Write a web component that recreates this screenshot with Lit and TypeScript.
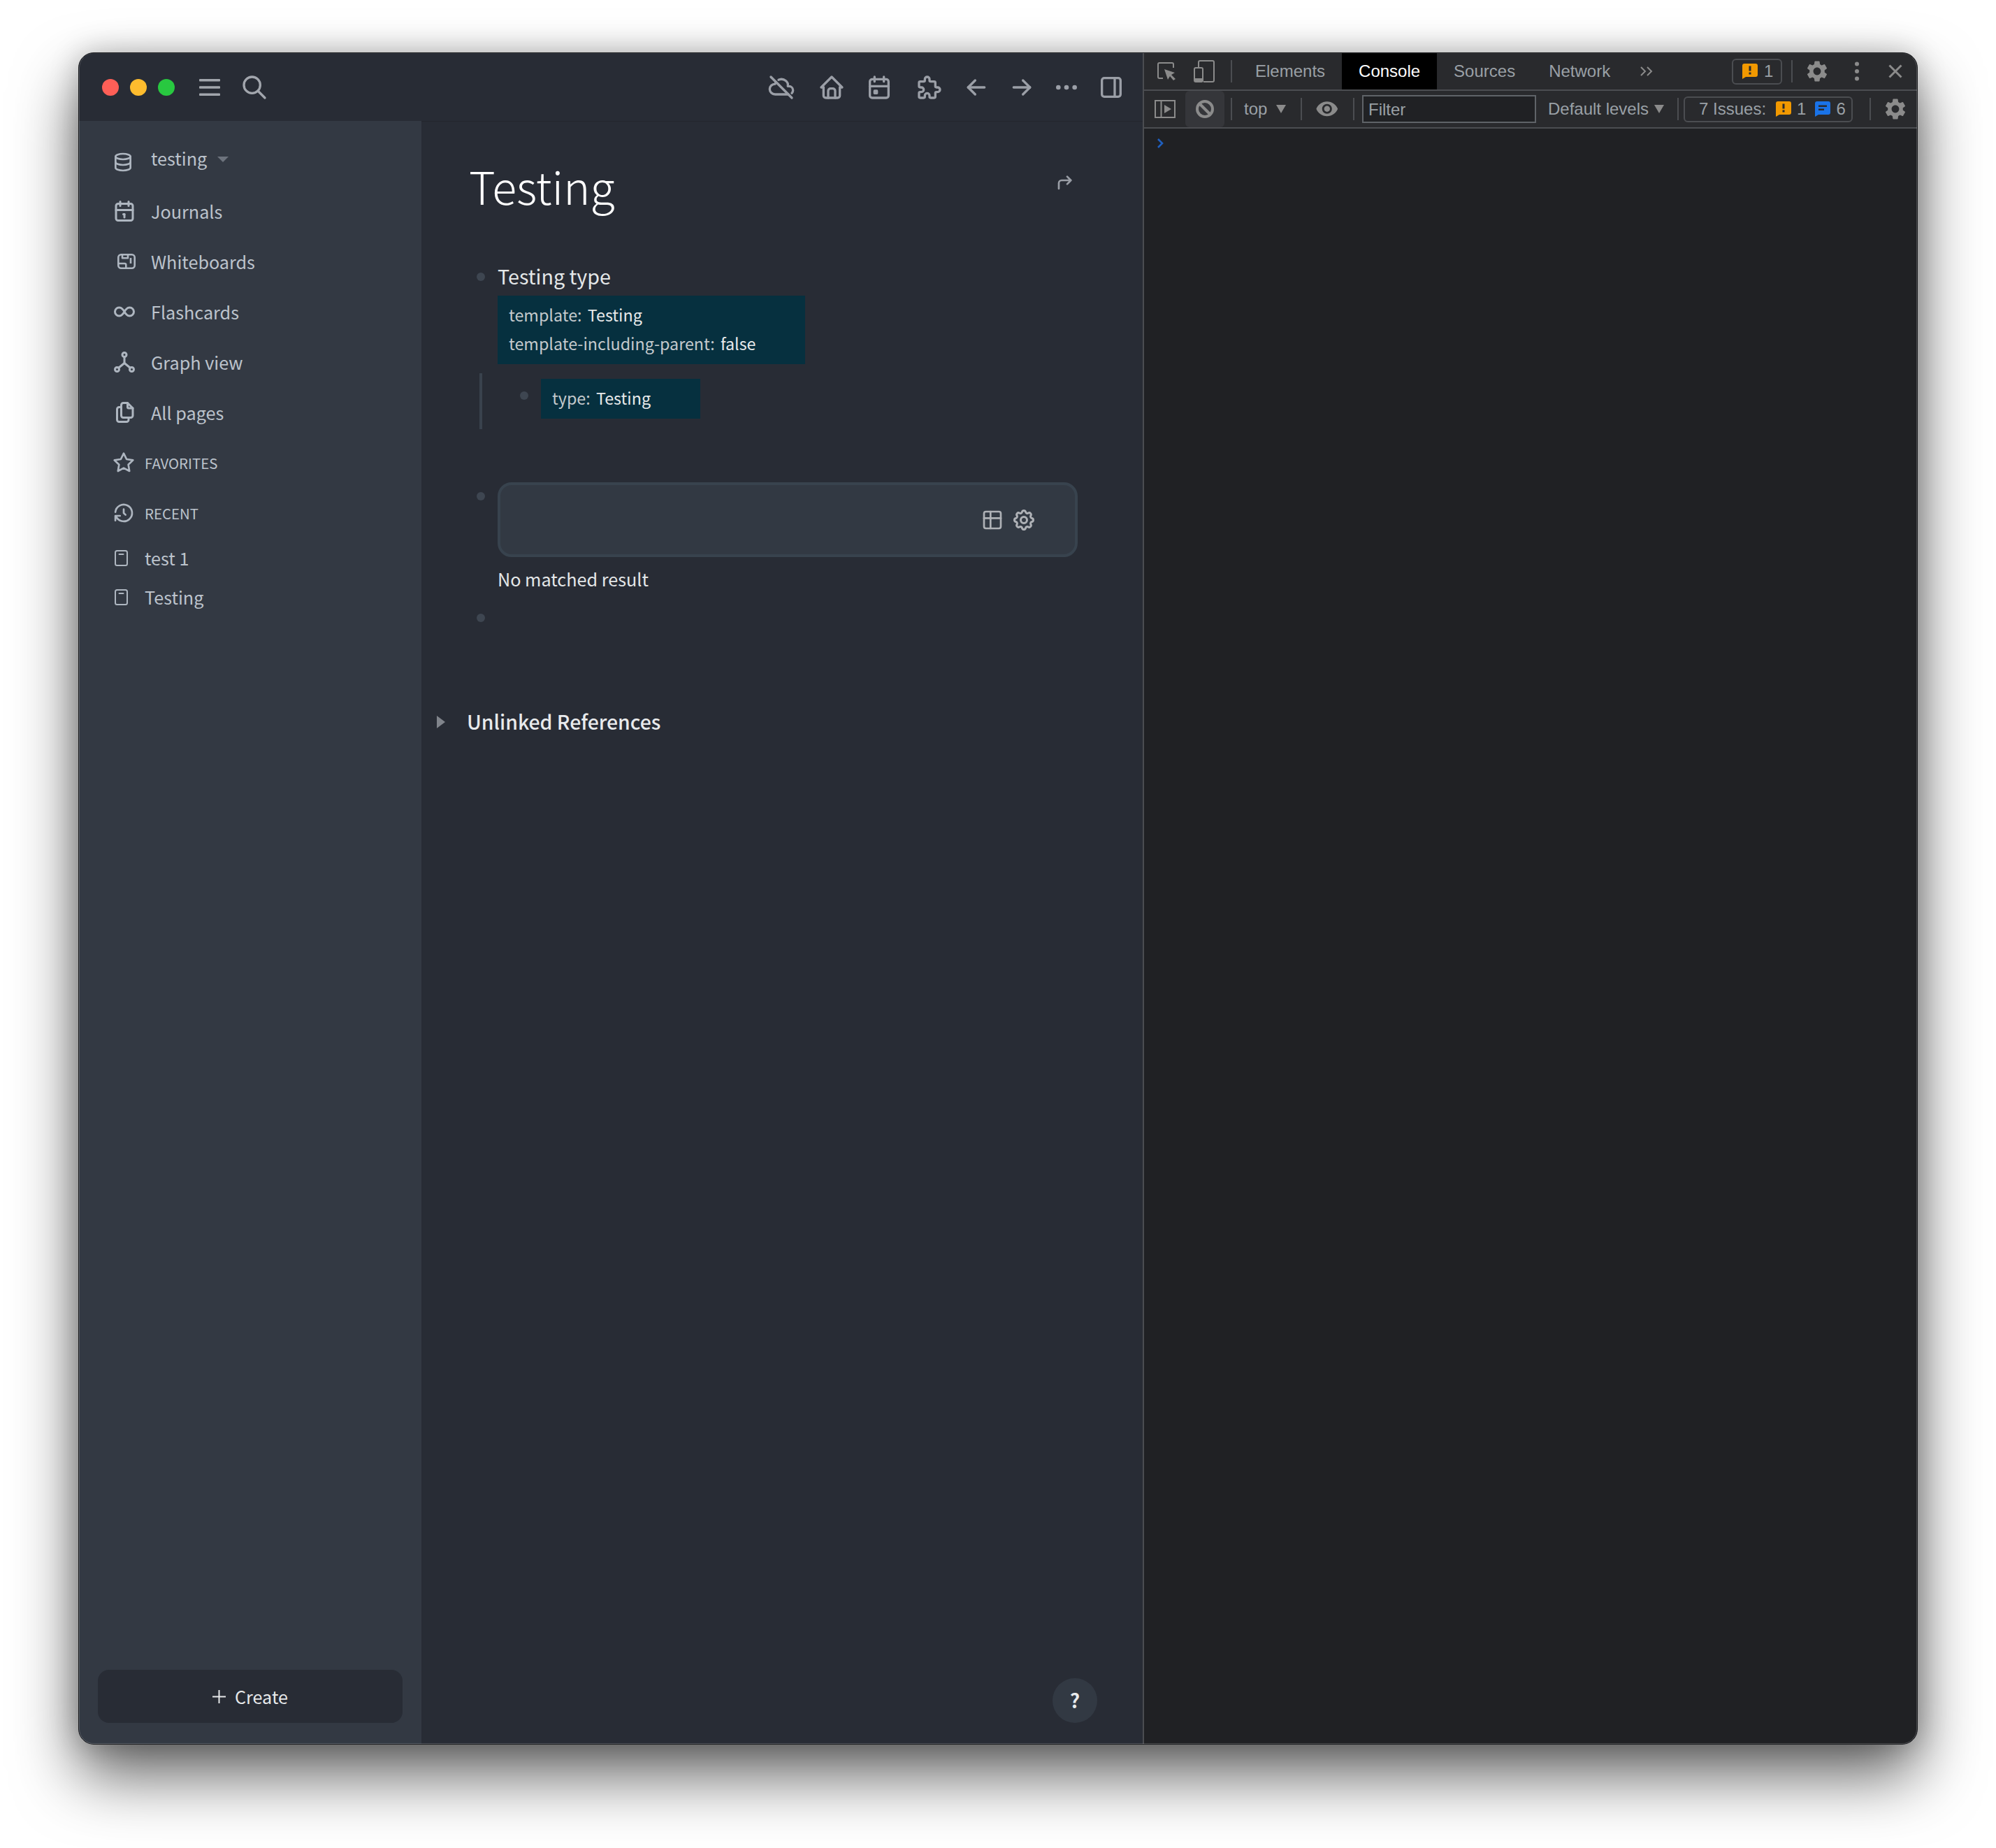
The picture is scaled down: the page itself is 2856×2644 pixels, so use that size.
import { LitElement, html, css, svg } from "lit";
import { customElement } from "lit/decorators.js";

const P = {
  cloudOff: ["M3 3l18 18", "M9.58 5.548c.24 -.11 .492 -.207 .752 -.286c1.88 -.572 3.956 -.193 5.444 1c1.488 1.19 2.162 3.007 1.77 4.769h.99c1.913 0 3.464 1.56 3.464 3.486c0 .957 -.383 1.824 -1.003 2.454m-2.997 1.033h-11.343c-2.572 -.004 -4.657 -2.011 -4.657 -4.487c0 -2.475 2.085 -4.482 4.657 -4.482c.13 -.582 .37 -1.128 .7 -1.62"],
  home: ["M5 12l-2 0l9 -9l9 9l-2 0", "M5 12v7a2 2 0 0 0 2 2h10a2 2 0 0 0 2 -2v-7", "M9 21v-6a2 2 0 0 1 2 -2h2a2 2 0 0 1 2 2v6"],
  calEvent: ["M4 7a2 2 0 0 1 2 -2h12a2 2 0 0 1 2 2v12a2 2 0 0 1 -2 2h-12a2 2 0 0 1 -2 -2z", "M16 3l0 4", "M8 3l0 4", "M4 11l16 0", "M8 15h2v2h-2z"],
  cal1: ["M4 7a2 2 0 0 1 2 -2h12a2 2 0 0 1 2 2v12a2 2 0 0 1 -2 2h-12a2 2 0 0 1 -2 -2z", "M16 3l0 4", "M8 3l0 4", "M4 11l16 0", "M11 15h1", "M12 15v3"],
  puzzle: ["M4 7h3a1 1 0 0 0 1 -1v-1a2 2 0 0 1 4 0v1a1 1 0 0 0 1 1h3a1 1 0 0 1 1 1v3a1 1 0 0 0 1 1h1a2 2 0 0 1 0 4h-1a1 1 0 0 0 -1 1v3a1 1 0 0 1 -1 1h-3a1 1 0 0 1 -1 -1v-1a2 2 0 0 0 -4 0v1a1 1 0 0 1 -1 1h-3a1 1 0 0 1 -1 -1v-3a1 1 0 0 1 1 -1h1a2 2 0 0 0 0 -4h-1a1 1 0 0 1 -1 -1v-3a1 1 0 0 1 1 -1"],
  left: ["M5 12l14 0", "M5 12l6 6", "M5 12l6 -6"],
  right: ["M5 12l14 0", "M13 18l6 -6", "M13 6l6 6"],
  dots: ["M4 12a1 1 0 1 0 2 0a1 1 0 1 0 -2 0", "M11 12a1 1 0 1 0 2 0a1 1 0 1 0 -2 0", "M18 12a1 1 0 1 0 2 0a1 1 0 1 0 -2 0"],
  panel: ["M4 6a2 2 0 0 1 2 -2h12a2 2 0 0 1 2 2v12a2 2 0 0 1 -2 2h-12a2 2 0 0 1 -2 -2z", "M15 4l0 16"],
  search: ["M3 10a7 7 0 1 0 14 0a7 7 0 1 0 -14 0", "M21 21l-6 -6"],
  db: ["M4 6a8 3 0 1 0 16 0a8 3 0 1 0 -16 0", "M4 6v6a8 3 0 0 0 16 0v-6", "M4 12v6a8 3 0 0 0 16 0v-6"],
  inf: ["M9.828 9.172a4 4 0 1 0 0 5.656a10 10 0 0 0 2.172 -2.828a10 10 0 0 1 2.172 -2.828a4 4 0 1 1 0 5.656a10 10 0 0 1 -2.172 -2.828a10 10 0 0 0 -2.172 -2.828"],
  graph: ["M10 5a2 2 0 1 0 4 0a2 2 0 1 0 -4 0", "M3 19a2 2 0 1 0 4 0a2 2 0 1 0 -4 0", "M17 19a2 2 0 1 0 4 0a2 2 0 1 0 -4 0", "M6.5 17.5l5.5 -4.5l5.5 4.5", "M12 7l0 6"],
  files: ["M15 3v4a1 1 0 0 0 1 1h4", "M18 17h-7a2 2 0 0 1 -2 -2v-10a2 2 0 0 1 2 -2h4l5 5v7a2 2 0 0 1 -2 2z", "M16 17v2a2 2 0 0 1 -2 2h-7a2 2 0 0 1 -2 -2v-10a2 2 0 0 1 2 -2h2"],
  star: ["M12 17.75l-6.172 3.245l1.179 -6.873l-5 -4.867l6.9 -1l3.086 -6.253l3.086 6.253l6.9 1l-5 4.867l1.179 6.873z"],
  history: ["M12 8l0 4l2 2", "M3.05 11a9 9 0 1 1 .5 4m-.5 5v-5h5"],
  share: ["M6 18v-6a3 3 0 0 1 3 -3h10l-4 -4m0 8l4 -4"],
  table: ["M3 5a2 2 0 0 1 2 -2h14a2 2 0 0 1 2 2v14a2 2 0 0 1 -2 2h-14a2 2 0 0 1 -2 -2v-14z", "M3 10h18", "M10 3v18"],
  gear: ["M10.325 4.317c.426 -1.756 2.924 -1.756 3.35 0a1.724 1.724 0 0 0 2.573 1.066c1.543 -.94 3.31 .826 2.37 2.37a1.724 1.724 0 0 0 1.065 2.572c1.756 .426 1.756 2.924 0 3.35a1.724 1.724 0 0 0 -1.066 2.573c.94 1.543 -.826 3.31 -2.37 2.37a1.724 1.724 0 0 0 -2.572 1.065c-.426 1.756 -2.924 1.756 -3.35 0a1.724 1.724 0 0 0 -2.573 -1.066c-1.543 .94 -3.31 -.826 -2.37 -2.37a1.724 1.724 0 0 0 -1.065 -2.572c-1.756 -.426 -1.756 -2.924 0 -3.35a1.724 1.724 0 0 0 1.066 -2.573c-.94 -1.543 .826 -3.31 2.37 -2.37c1 .608 2.296 .07 2.572 -1.065z", "M9 12a3 3 0 1 0 6 0a3 3 0 1 0 -6 0"],
};

const ti = (paths: string[], cls: string) => html`<svg class="ti ${cls}" viewBox="0 0 24 24">${paths.map((d) => svg`<path d=${d}></path>`)}</svg>`;

const whiteboard = html`<svg class="wb" viewBox="0 0 26 22"><rect x="1.3" y="1.3" width="23.4" height="19.4" rx="4"></rect><path d="M7 1.3v5h8v-5M1.3 14h9a2 2 0 0 1 2 2v4.7M19 6v8"></path></svg>`;
const pageIcon = html`<svg class="pg" viewBox="0 0 19 23"><rect x="1" y="1" width="17" height="21" rx="2.5"></rect><path d="M6.5 6h6"></path></svg>`;
const matGear = () => html`<svg class="mat" viewBox="0 0 24 24"><path d="M19.14 12.94c.04-.3.06-.61.06-.94 0-.32-.02-.64-.07-.94l2.03-1.58a.49.49 0 0 0 .12-.61l-1.92-3.32a.488.488 0 0 0-.59-.22l-2.39.96c-.5-.38-1.03-.7-1.62-.94l-.36-2.54a.484.484 0 0 0-.48-.41h-3.84c-.24 0-.43.17-.47.41l-.36 2.54c-.59.24-1.13.57-1.62.94l-2.39-.96c-.22-.08-.47 0-.59.22L2.74 8.87c-.12.21-.08.47.12.61l2.03 1.58c-.05.3-.09.63-.09.94s.02.64.07.94l-2.03 1.58a.49.49 0 0 0-.12.61l1.92 3.32c.12.22.37.29.59.22l2.39-.96c.5.38 1.03.7 1.62.94l.36 2.54c.05.24.24.41.48.41h3.84c.24 0 .44-.17.47-.41l.36-2.54c.59-.24 1.13-.56 1.62-.94l2.39.96c.22.08.47 0 .59-.22l1.92-3.32c.12-.22.07-.47-.12-.61l-2.01-1.58zM12 15.6c-1.98 0-3.6-1.62-3.6-3.6s1.62-3.6 3.6-3.6 3.6 1.62 3.6 3.6-1.62 3.6-3.6 3.6z"></path></svg>`;
const warnIcon = html`<svg class="bubble" viewBox="0 0 22 22"><path class="or" d="M3 0h16a3 3 0 0 1 3 3v13a3 3 0 0 1-3 3H5L0 22V3a3 3 0 0 1 3-3z"></path><rect class="dk" x="9.5" y="3.5" width="3" height="7"></rect><rect class="dk" x="9.5" y="12.5" width="3" height="3"></rect></svg>`;
const infoIcon = html`<svg class="bubble" viewBox="0 0 22 22"><path class="bl" d="M3 0h16a3 3 0 0 1 3 3v13a3 3 0 0 1-3 3H5L0 22V3a3 3 0 0 1 3-3z"></path><rect class="dk" x="5" y="5.5" width="12" height="2.5"></rect><rect class="dk" x="5" y="10.5" width="8" height="2.5"></rect></svg>`;

const headerIcons: [string[], number][] = [
  [P.cloudOff, 0], [P.home, 32], [P.calEvent, 28], [P.puzzle, 32],
  [P.left, 27], [P.right, 25], [P.dots, 24], [P.panel, 24],
];

const nav: [unknown, string][] = [
  [ti(P.cal1, "s36"), "Journals"],
  [whiteboard, "Whiteboards"],
  [ti(P.inf, "s36"), "Flashcards"],
  [ti(P.graph, "s36"), "Graph view"],
  [ti(P.files, "s36"), "All pages"],
];

@customElement("app-root")
export class AppRoot extends LitElement {
  static styles = css`
    :host {
      display: block; width: 2856px; height: 2644px; box-sizing: border-box;
      padding: 75px 112px 148px; background: #fff;
      font-family: "Noto Sans CJK SC", "Noto Sans", sans-serif;
    }
    .window {
      position: relative; display: flex; width: 2632px; height: 2421px; box-sizing: border-box;
      border: 1px solid #17181b; border-radius: 22px; overflow: hidden; background: #282c35;
    }
    .shadow { border-radius: 22px; box-shadow: 0 44px 90px rgba(0,0,0,.62), 0 0 40px rgba(0,0,0,.22); }
    .rim {
      position: absolute; inset: 0; border: 1px solid rgba(255,255,255,.2);
      border-top-color: rgba(255,255,255,.06);
      border-radius: 21px; pointer-events: none;
    }
    svg { display: block; flex: none; }
    .ti { fill: none; stroke: currentColor; stroke-width: 2; stroke-linecap: round; stroke-linejoin: round; }
    .s40 { width: 40px; height: 40px; }
    .s36 { width: 36px; height: 36px; }
    .s32 { width: 32px; height: 32px; }

    .app { flex: none; width: 1522px; display: flex; flex-direction: column; }
    .header { flex: none; height: 97px; display: flex; align-items: center; padding: 0 25px 0 33px; color: #9b9fa7; box-sizing: border-box; }
    .lights { display: flex; gap: 16px; }
    .light { width: 24px; height: 24px; border-radius: 50%; }
    .red { background: #ff5f57; } .yellow { background: #febc2e; } .green { background: #28c840; }
    .burger { width: 30px; margin-left: 35px; color: #a2a6ad; }
    .burger svg { width: 30px; height: 24px; fill: currentColor; }
    .search { margin-left: 29px; color: #a2a6ad; }
    .hright { margin-left: auto; display: flex; }

    .body { flex: 1; display: flex; min-height: 0; }
    .sidebar {
      flex: none; width: 490px; box-sizing: border-box; background: #333943; padding-top: 17px;
      display: flex; flex-direction: column; color: #bcc3cc; font-size: 25.2px; line-height: 36px;
    }
    .row { display: flex; align-items: center; height: 72px; padding-left: 47px; color: #bcc3cc; flex: none; }
    .row .box { width: 36px; display: flex; justify-content: center; color: #aeb6c0; margin-right: 20px; }
    .row.first { margin-bottom: 4px; }
    .row.first .box { justify-content: flex-start; margin-top: 12px; width: 32px; margin-right: 24px; }
    .caret { width: 0; height: 0; margin: 4px 0 0 15px; border-left: 8px solid transparent; border-right: 8px solid transparent; border-top: 8px solid #6d737d; }
    .sec { font-size: 20.4px; }
    .sec .box { width: 33px; margin-right: 14px; justify-content: center; }
    .rec { height: 56px; }
    .rec .box { width: 33px; margin-right: 14px; justify-content: flex-start; padding-left: 4px; box-sizing: border-box; }
    .wb { width: 26px; height: 22px; fill: none; stroke: currentColor; stroke-width: 2.6; stroke-linejoin: round; margin-left: 5px; }
    .pg { width: 19px; height: 23px; fill: none; stroke: currentColor; stroke-width: 2; stroke-linecap: round; }
    .create {
      margin: auto 27px 30px; height: 76px; border-radius: 16px; background: #282c35; color: #e6e8ea;
      display: flex; align-items: center; justify-content: center; font-size: 25.2px; gap: 13px; flex: none;
    }
    .plus { width: 19px; height: 19px; stroke: currentColor; stroke-width: 2; fill: none; }

    .main { position: relative; flex: 1; min-width: 0; border-top: 1px solid #23262d; box-sizing: border-box; background: #282c35; color: #e4e7e8; }
    .titlerow { display: flex; justify-content: space-between; height: 96px; margin: 46px 96px 0 68px; }
    .title { font-size: 64.6px; font-weight: 300; line-height: 91px; color: #fff; }
    .share { color: #9a9ea6; margin-top: 26px; }
    .block { display: flex; align-items: center; }
    .bullet { width: 12px; height: 12px; border-radius: 50%; background: #3e4651; flex: none; }
    .b1 { margin: 53px 0 0 79px; height: 54px; font-size: 28.7px; }
    .b1 .bullet { margin-right: 18px; }
    .b1 span { margin-top: -3px; }
    .b1 .bullet { margin-top: 0; }
    .code { background: #06303f; font-size: 23.3px; line-height: 41px; padding: 7px 16px 9px; box-sizing: border-box; color: #c3c9cc; }
    .code b { font-weight: 400; color: #e6e9ea; margin-left: 3px; }
    .c1 { margin-left: 109px; width: 440px; }
    .kids { margin: 13px 0 0 83px; height: 80px; box-sizing: border-box; border-left: 4px solid #39424d; padding: 8px 0 0 54px; display: flex; align-items: flex-start; }
    .kids .bullet { margin: 18px 18px 0 0; }
    .c2 { width: 228px; }
    .query-row { display: flex; margin: 76px 0 0 79px; }
    .query-row .bullet { margin: 14px 18px 0 0; }
    .query {
      width: 830px; height: 107px; box-sizing: border-box; border: 4px solid #38434e; border-radius: 20px; background: #323943;
      display: flex; align-items: center; justify-content: flex-end; padding-right: 55px; color: #aeb1b6; gap: 11px;
    }
    .nomatch { height: 64px; line-height: 62px; margin-left: 109px; font-size: 25.2px; color: #e4e7e8; }
    .empty { height: 46px; margin-left: 79px; }
    .unlinked { height: 60px; margin: 96px 0 0 22px; font-size: 28.4px; font-weight: 500; color: #e8eaec; display: flex; align-items: center; }
    .unlinked span { margin-top: -3px; }
    .tri { width: 0; height: 0; border-top: 9px solid transparent; border-bottom: 9px solid transparent; border-left: 12px solid #80848b; margin-right: 31px; }
    .help {
      position: absolute; right: 65px; bottom: 30px; width: 64px; height: 64px; border-radius: 50%;
      background: #323943; color: #e9ebed; font-size: 28px; font-weight: 700; padding-bottom: 3px; box-sizing: border-box;
      display: flex; align-items: center; justify-content: center;
    }

    .dev {
      flex: none; width: 1108px; box-sizing: border-box; border-left: 2px solid #4b4d51; background: #202124;
      font-family: "Liberation Sans", Arial, sans-serif; font-size: 24px; color: #9aa0a6;
      display: flex; flex-direction: column;
    }
    .bar { flex: none; display: flex; align-items: center; height: 54px; box-sizing: border-box; background: #292a2d; border-bottom: 2px solid #4b4d51; }
    .sep { width: 2px; height: 32px; background: #4b4d51; flex: none; }
    .tab { padding: 0 24px; height: 100%; display: flex; align-items: center; color: #9aa0a6; }
    .tab.on { background: #000; color: #fff; }
    .mat { fill: #8b8b8b; width: 36px; height: 36px; }
    .eye { width: 33.6px; height: 33.6px; }
    .stroke { fill: none; stroke: #8b8b8b; stroke-width: 2; }
    .thick { stroke-width: 4; }
    .x3 { stroke-width: 3; }
    .solid { fill: #8b8b8b; stroke: none; }
    .bubble { width: 22px; height: 22px; }
    .or { fill: #f29900; } .bl { fill: #1a73e8; } .dk { fill: #292a2d; }
    .badge { display: flex; align-items: center; height: 37px; box-sizing: border-box; border: 2px solid #4b4d51; border-radius: 6px; flex: none; }
    .w72 { width: 72px; } .w242 { width: 242px; }
    .down { width: 0; height: 0; border-left: 7px solid transparent; border-right: 7px solid transparent; border-top: 12px solid #8b8b8b; flex: none; }
    .clear { width: 56px; height: 52px; border-radius: 6px; background: #35363a; display: flex; align-items: center; justify-content: center; }
    .filter { width: 249px; height: 40px; box-sizing: border-box; border: 2px solid #5f6368; background: #202124; padding-left: 7px; line-height: 37px; color: #9aa0a6; flex: none; }
    .console { flex: 1; padding: 14px 0 0 18px; }
    .prompt { width: 10px; height: 14px; fill: none; stroke: #1f5fbf; stroke-width: 2.6; }
    .pr21 { padding-right: 21px; } .mr17 { margin-right: 17px; }
    .mauto { margin-left: auto; }
    .m7 { margin-left: 7px; } .m8 { margin-left: 8px; } .m9 { margin-left: 9px; } .m11 { margin-left: 11px; }
    .m13 { margin-left: 13px; } .m14 { margin-left: 14px; } .m15 { margin-left: 15px; } .m17 { margin-left: 17px; }
    .m19 { margin-left: 19px; } .m20 { margin-left: 20px; } .m21 { margin-left: 21px; }
    .m23 { margin-left: 23px; } .m26 { margin-left: 26px; } .m39 { margin-left: 39px; } .m41 { margin-left: 41px; }
    .gearbox { width: 28px; height: 28px; display: flex; align-items: center; justify-content: center; flex: none; }
  `;

  render() {
    return html`
      <div class="shadow">
      <div class="window">
        <div class="app">
          <div class="header">
            <div class="lights"><div class="light red"></div><div class="light yellow"></div><div class="light green"></div></div>
            <div class="burger"><svg viewBox="0 0 30 24"><rect y="0" width="30" height="3.6" rx="1"></rect><rect y="10.2" width="30" height="3.6" rx="1"></rect><rect y="20.4" width="30" height="3.6" rx="1"></rect></svg></div>
            <div class="search">${ti(P.search, "s40")}</div>
            <div class="hright">
              ${headerIcons.map(([p, g]) => html`<div style="margin-left:${g}px">${ti(p, "s40")}</div>`)}
            </div>
          </div>
          <div class="body">
            <div class="sidebar">
              <div class="row first"><div class="box">${ti(P.db, "s32")}</div><span>testing</span><div class="caret"></div></div>
              ${nav.map(([ic, t]) => html`<div class="row"><div class="box">${ic}</div><span>${t}</span></div>`)}
              <div class="row sec"><div class="box">${ti(P.star, "s32")}</div><span>FAVORITES</span></div>
              <div class="row sec"><div class="box">${ti(P.history, "s32")}</div><span>RECENT</span></div>
              <div class="row rec"><div class="box">${pageIcon}</div><span>test 1</span></div>
              <div class="row rec"><div class="box">${pageIcon}</div><span>Testing</span></div>
              <div class="create"><svg class="plus" viewBox="0 0 19 19"><path d="M9.5 0v19M0 9.5h19"></path></svg><span>Create</span></div>
            </div>
            <div class="main">
              <div class="titlerow"><div class="title">Testing</div><div class="share">${ti(P.share, "s32")}</div></div>
              <div class="block b1"><div class="bullet"></div><span>Testing type</span></div>
              <div class="code c1"><div>template: <b>Testing</b></div><div>template-including-parent: <b>false</b></div></div>
              <div class="kids"><div class="bullet"></div><div class="code c2">type: <b>Testing</b></div></div>
              <div class="query-row"><div class="bullet"></div>
                <div class="query">${ti(P.table, "s32")}${ti(P.gear, "s36")}</div>
              </div>
              <div class="nomatch">No matched result</div>
              <div class="block empty"><div class="bullet"></div></div>
              <div class="unlinked"><div class="tri"></div><span>Unlinked References</span></div>
              <div class="help">?</div>
            </div>
          </div>
        </div>
        <div class="dev">
          <div class="bar pr21">
            <svg class="m19" width="26" height="26" viewBox="0 0 26 26"><path class="stroke" d="M8 23H3a2 2 0 0 1-2-2V3a2 2 0 0 1 2-2h18a2 2 0 0 1 2 2v5"></path><path class="solid" d="M10 10l15 5-5 3 6 6-3 2-5-6-3 5z"></path></svg>
            <svg class="m26" width="30" height="32" viewBox="0 0 30 32"><path class="stroke" d="M7 10V3a2 2 0 0 1 2-2h18a2 2 0 0 1 2 2v26a2 2 0 0 1-2 2H14"></path><rect class="stroke" x="1" y="11" width="12" height="20" rx="2"></rect><rect class="solid" x="1" y="26" width="12" height="5"></rect></svg>
            <div class="sep m23"></div>
            <div class="tab m9">Elements</div>
            <div class="tab on">Console</div>
            <div class="tab">Sources</div>
            <div class="tab">Network</div>
            <svg class="m19" width="18" height="14" viewBox="0 0 18 14"><path class="stroke" d="M1 1l6 6-6 6M10 1l6 6-6 6"></path></svg>
            <div class="badge w72 mauto"><span class="m13">${warnIcon}</span><span class="m9">1</span></div>
            <div class="sep m13"></div>
            <div class="gearbox m21">${matGear()}</div>
            <svg class="m39" width="8" height="28" viewBox="0 0 8 28"><circle class="solid" cx="4" cy="3.5" r="3"></circle><circle class="solid" cx="4" cy="14" r="3"></circle><circle class="solid" cx="4" cy="24.5" r="3"></circle></svg>
            <svg class="m41" width="20" height="20" viewBox="0 0 20 20"><path class="stroke x3" d="M1.5 1.5l17 17M18.5 1.5l-17 17"></path></svg>
          </div>
          <div class="bar">
            <svg class="m15" width="30" height="26" viewBox="0 0 30 26"><rect class="stroke" x="1" y="1" width="28" height="24"></rect><path class="stroke" d="M9.5 1v24"></path><path class="solid" d="M14 7l10 6-10 6z"></path></svg>
            <div class="clear m14"><svg width="26" height="26" viewBox="0 0 26 26"><circle class="stroke thick" cx="13" cy="13" r="11"></circle><path class="stroke thick" d="M5 5l16 16"></path></svg></div>
            <div class="sep m9"></div>
            <span class="m17">top</span>
            <div class="down m13"></div>
            <div class="sep m21"></div>
            <svg class="mat eye m19" viewBox="0 0 24 24"><path d="M12 4.5C7 4.5 2.73 7.61 1 12c1.73 4.39 6 7.5 11 7.5s9.27-3.11 11-7.5c-1.73-4.39-6-7.5-11-7.5zM12 17c-2.76 0-5-2.24-5-5s2.24-5 5-5 5 2.24 5 5-2.24 5-5 5zm0-8c-1.66 0-3 1.34-3 3s1.34 3 3 3 3-1.34 3-3-1.34-3-3-3z"></path></svg>
            <div class="sep m20"></div>
            <div class="filter m11">Filter</div>
            <span class="m17">Default levels</span>
            <div class="down m8"></div>
            <div class="sep m19"></div>
            <div class="badge w242 m7"><span class="m20">7 Issues:</span><span class="m14">${warnIcon}</span><span class="m8">1</span><span class="m13">${infoIcon}</span><span class="m8">6</span></div>
            <div class="sep mauto"></div>
            <div class="gearbox m21 mr17">${matGear()}</div>
          </div>
          <div class="console"><svg class="prompt" viewBox="0 0 10 14"><path d="M2 1l6 6-6 6"></path></svg></div>
        </div>
        <div class="rim"></div>
      </div>
      </div>
    `;
  }
}
